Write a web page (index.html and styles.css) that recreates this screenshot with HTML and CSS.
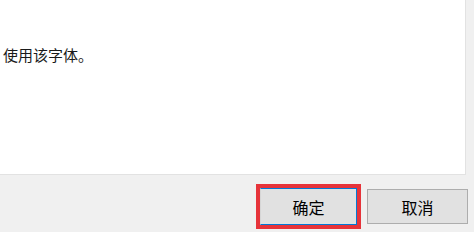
FILE: index.html
```html
<!DOCTYPE html>
<html>

<head>
    <meta charset="UTF-8">
    <title>字体</title>
    <link rel="stylesheet" href="styles.css">
</head>

<body>
    <div class="panel">
        <p class="note">使用该字体。</p>
    </div>
    <div class="footer">
        <div class="mark">
            <button class="btn btn-ok">确定</button>
        </div>
        <button class="btn btn-cancel">取消</button>
    </div>
</body>

</html>
```

FILE: styles.css
```css
html,
body {
    margin: 0;
    height: 100%;
    background-color: #f0f0f0;
    font-family: "Noto Sans CJK SC", "Noto Sans", sans-serif;
    overflow: hidden;
}

.panel {
    width: 466px;
    height: 175px;
    box-sizing: border-box;
    background: #fff;
    border-right: 1px solid #e2e2e2;
    border-bottom: 1px solid #e2e2e2;
}

.note {
    margin: 0;
    padding: 44px 0 0 3px;
    font-size: 15px;
    line-height: 22px;
    color: #1a1a1a;
}

.footer {
    display: flex;
    justify-content: flex-end;
    align-items: center;
    gap: 6px;
    padding: 9px 6px 0 0;
}

.mark {
    display: flex;
    border: 4px solid #e6333a;
}

.btn {
    margin: 0;
    padding: 0;
    font-family: inherit;
    font-size: 16px;
    color: #000;
    background: #e1e1e1;
    border: 1px solid #adadad;
}

.btn-ok {
    width: 97px;
    height: 37px;
    border-color: #0078d7;
    border-left-color: #d6d6d6;
}

.btn-cancel {
    width: 101px;
    height: 35px;
}
```
